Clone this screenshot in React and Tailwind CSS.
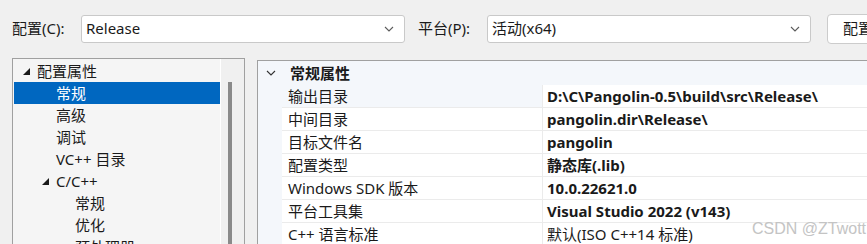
import { useState } from "react";

const props = [
  ["输出目录", "D:\\C\\Pangolin-0.5\\build\\src\\Release\\", true],
  ["中间目录", "pangolin.dir\\Release\\", true],
  ["目标文件名", "pangolin", true],
  ["配置类型", "静态库(.lib)", true],
  ["Windows SDK 版本", "10.0.22621.0", true],
  ["平台工具集", "Visual Studio 2022 (v143)", true],
  ["C++ 语言标准", "默认(ISO C++14 标准)", false],
];

const tree = [
  { label: "配置属性", indent: 0, open: true },
  { label: "常规", indent: 1 },
  { label: "高级", indent: 1 },
  { label: "调试", indent: 1 },
  { label: "VC++ 目录", indent: 1 },
  { label: "C/C++", indent: 1, open: true },
  { label: "常规", indent: 2 },
  { label: "优化", indent: 2 },
  { label: "预处理器", indent: 2 },
];

const Chevron = ({ className }) => (
  <svg width="10" height="6" viewBox="0 0 10 6" className={className}>
    <polyline points="1,1 5,5 9,1" fill="none" stroke="currentColor" strokeWidth="1.1" />
  </svg>
);

const Triangle = () => (
  <svg width="7" height="7" viewBox="0 0 7 7">
    <polygon points="7,0 7,7 0,7" fill="#1a1a1a" />
  </svg>
);

const Combo = ({ value }) => (
  <div className="shrink-0 h-[28px] w-[324px] bg-white border border-[#c9c9c9] rounded-[3px] flex items-center pl-[4px] pr-[10px]">
    <span className="flex-1">{value}</span>
    <Chevron className="text-[#5c5c5c]" />
  </div>
);

export default function App() {
  const [selected, setSelected] = useState(1);

  return (
    <div className="relative h-[244px] w-[867px] overflow-hidden bg-[#f0f0f0] text-[15px] text-[#1a1a1a] font-['Noto_Sans','Noto_Sans_CJK_SC',sans-serif] leading-none">
      {/* top bar */}
      <div className="flex items-center h-[56px] pt-[1px] pl-[12px]">
        <span className="shrink-0 w-[69px]">配置(C):</span>
        <Combo value="Release" />
        <span className="shrink-0 ml-[13px] w-[69px]">平台(P):</span>
        <Combo value="活动(x64)" />
        <div className="shrink-0 ml-[16px] h-[30px] pl-[15px] pr-[10px] bg-white border border-[#cccccc] rounded-[4px] flex items-center whitespace-nowrap">
          配置管理器(O)...
        </div>
      </div>

      <div className="flex items-start">
        {/* tree */}
        <div className="shrink-0 ml-[12px] mt-[2px] w-[233px] h-[200px] border border-[#a0a0a0] bg-[#f5f5f5] flex">
          <div className="w-[207px] pl-[1px] pt-[1px]">
            {tree.map((t, i) => (
              <div
                key={i}
                onClick={() => setSelected(i)}
                className={`h-[22px] flex items-center whitespace-nowrap ${
                  selected === i ? "bg-[#0067c0] text-white" : ""
                }`}
              >
                <span
                  className={`flex justify-end pr-[7px] ${
                    t.indent === 0 ? "w-[23px]" : t.indent === 1 ? "w-[42px]" : "w-[61px]"
                  }`}
                >
                  {t.open && <Triangle />}
                </span>
                {t.label}
              </div>
            ))}
          </div>
          <div className="flex-1 border-l border-white bg-[#f0f0f0] pt-[23px] pl-[7px]">
            <div className="w-[4px] h-[200px] bg-[#8a8a8a]" />
          </div>
        </div>

        {/* property grid */}
        <div className="ml-[12px] mt-[4px] flex-1 h-[200px] border-l border-t border-[#a0a0a0] bg-[#f4f7fb]">
          <div className="h-[24px] flex items-center font-bold">
            <Chevron className="ml-[8px] mr-[14px] text-[#333]" />
            常规属性
          </div>
          {props.map(([name, value, bold], i) => (
            <div key={i} className="flex h-[23px] pl-[24px]">
              <div
                className={`w-[260px] pl-[6px] flex items-center border-b border-[#ebebeb] ${
                  i === 0 ? "" : "bg-white"
                }`}
              >
                {name}
              </div>
              <div
                className={`flex-1 pl-[4px] flex items-center bg-white border-l border-b border-[#ebebeb] whitespace-nowrap ${
                  bold ? "font-bold" : ""
                }`}
              >
                {value}
              </div>
            </div>
          ))}
        </div>
      </div>

      <div className="absolute left-[752px] top-[221px] text-[16px] text-[#c4c4c4] font-['Liberation_Sans',sans-serif]">
        CSDN @ZTwott
      </div>
    </div>
  );
}
